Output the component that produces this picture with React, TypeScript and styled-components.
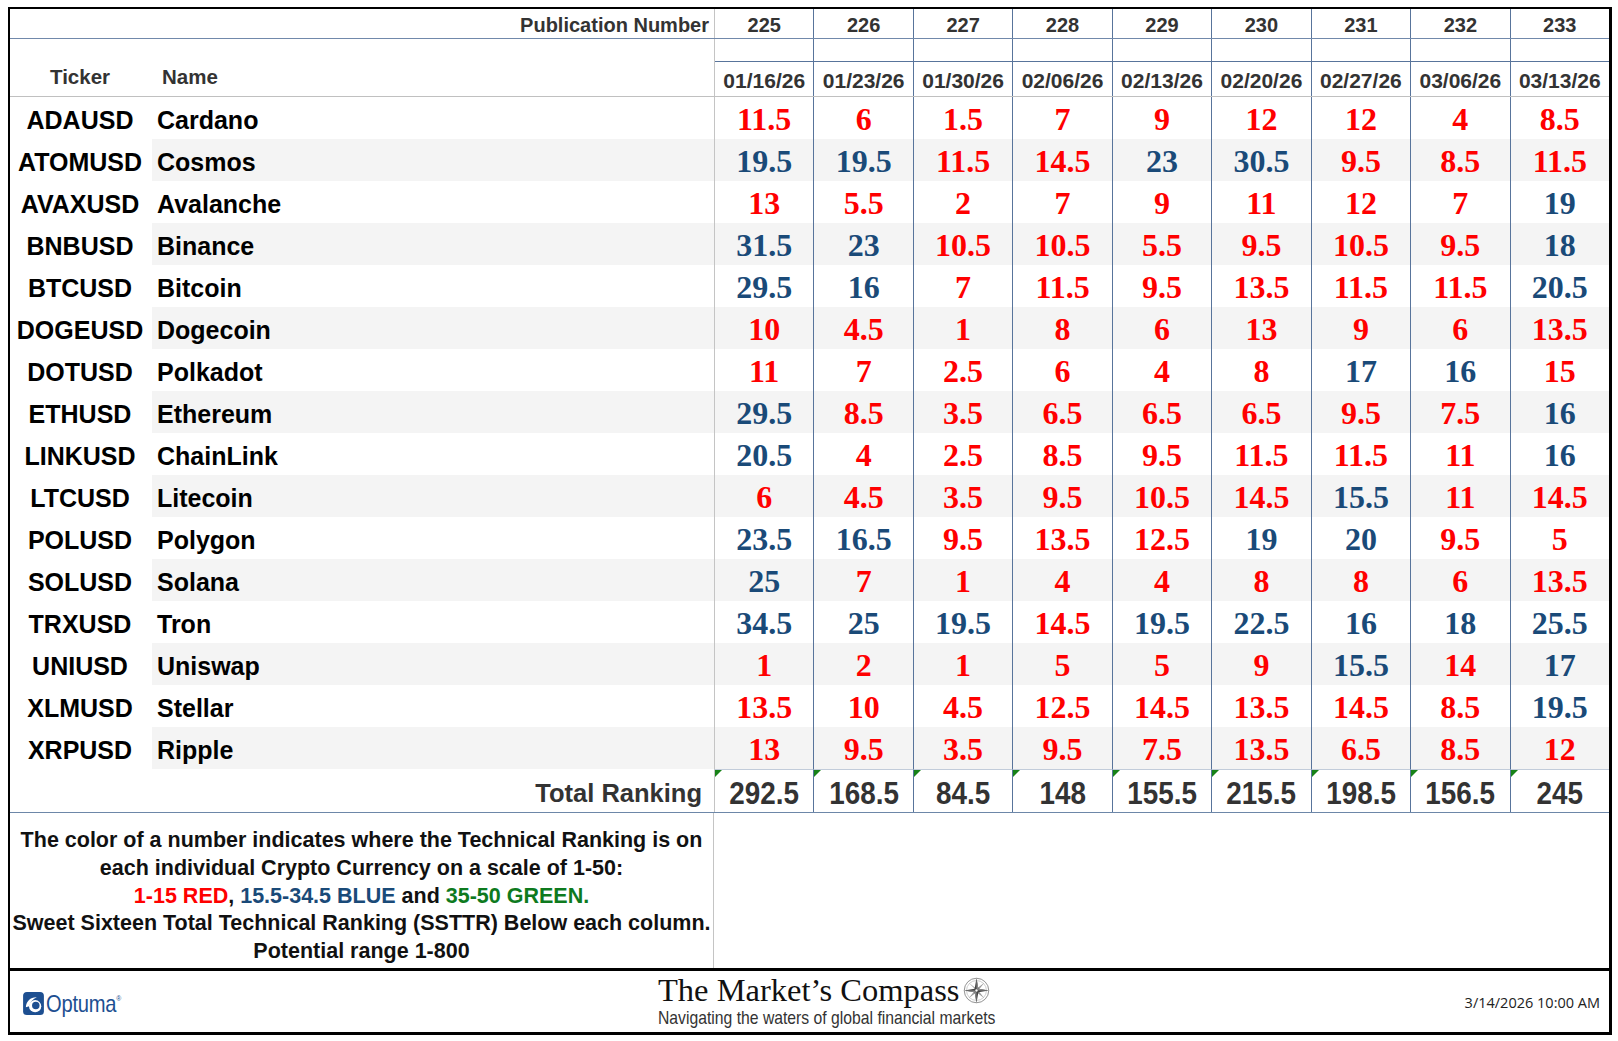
import React from "react";
import styled, { createGlobalStyle } from "styled-components";

const GlobalStyle = createGlobalStyle`
  html, body { margin: 0; padding: 0; background: #ffffff; }
  body { font-family: "Liberation Sans", Arial, sans-serif; }
  * { box-sizing: border-box; }
`;

const COLS = "140px 564px repeat(9, minmax(0, 1fr))";
const SANS = `"Liberation Sans", Arial, sans-serif`;
const SERIF = `"Liberation Serif", "Times New Roman", serif`;

type Coin = { ticker: string; name: string; values: number[] };

const PUBS = [225, 226, 227, 228, 229, 230, 231, 232, 233];
const DATES = ["01/16/26", "01/23/26", "01/30/26", "02/06/26", "02/13/26", "02/20/26", "02/27/26", "03/06/26", "03/13/26"];
const TOTALS = ["292.5", "168.5", "84.5", "148", "155.5", "215.5", "198.5", "156.5", "245"];

const DATA: Coin[] = [
  { ticker: "ADAUSD", name: "Cardano", values: [11.5, 6, 1.5, 7, 9, 12, 12, 4, 8.5] },
  { ticker: "ATOMUSD", name: "Cosmos", values: [19.5, 19.5, 11.5, 14.5, 23, 30.5, 9.5, 8.5, 11.5] },
  { ticker: "AVAXUSD", name: "Avalanche", values: [13, 5.5, 2, 7, 9, 11, 12, 7, 19] },
  { ticker: "BNBUSD", name: "Binance", values: [31.5, 23, 10.5, 10.5, 5.5, 9.5, 10.5, 9.5, 18] },
  { ticker: "BTCUSD", name: "Bitcoin", values: [29.5, 16, 7, 11.5, 9.5, 13.5, 11.5, 11.5, 20.5] },
  { ticker: "DOGEUSD", name: "Dogecoin", values: [10, 4.5, 1, 8, 6, 13, 9, 6, 13.5] },
  { ticker: "DOTUSD", name: "Polkadot", values: [11, 7, 2.5, 6, 4, 8, 17, 16, 15] },
  { ticker: "ETHUSD", name: "Ethereum", values: [29.5, 8.5, 3.5, 6.5, 6.5, 6.5, 9.5, 7.5, 16] },
  { ticker: "LINKUSD", name: "ChainLink", values: [20.5, 4, 2.5, 8.5, 9.5, 11.5, 11.5, 11, 16] },
  { ticker: "LTCUSD", name: "Litecoin", values: [6, 4.5, 3.5, 9.5, 10.5, 14.5, 15.5, 11, 14.5] },
  { ticker: "POLUSD", name: "Polygon", values: [23.5, 16.5, 9.5, 13.5, 12.5, 19, 20, 9.5, 5] },
  { ticker: "SOLUSD", name: "Solana", values: [25, 7, 1, 4, 4, 8, 8, 6, 13.5] },
  { ticker: "TRXUSD", name: "Tron", values: [34.5, 25, 19.5, 14.5, 19.5, 22.5, 16, 18, 25.5] },
  { ticker: "UNIUSD", name: "Uniswap", values: [1, 2, 1, 5, 5, 9, 15.5, 14, 17] },
  { ticker: "XLMUSD", name: "Stellar", values: [13.5, 10, 4.5, 12.5, 14.5, 13.5, 14.5, 8.5, 19.5] },
  { ticker: "XRPUSD", name: "Ripple", values: [13, 9.5, 3.5, 9.5, 7.5, 13.5, 6.5, 8.5, 12] },
];

const RED = "#ff0000";
const BLUE = "#1a4a78";
const GREEN = "#0e7a1e";

const rankColor = (v: number) => (v <= 15 ? RED : v < 35 ? BLUE : GREEN);

const Frame = styled.div`
  margin: 7px 0 0 8px;
  width: 1604px;
  border: 2px solid #000;
  border-right-width: 3px;
  border-bottom-width: 3px;
  background: #fff;
`;

const GridRow = styled.div<{ $h: number; $line?: string }>`
  display: grid;
  grid-template-columns: ${COLS};
  height: ${(p) => p.$h}px;
  border-bottom: ${(p) => (p.$line ? `1px solid ${p.$line}` : "none")};
`;

const ColCell = styled.div<{ $first?: boolean }>`
  border-left: 1px solid ${(p) => (p.$first ? "#c4c4c4" : "#58749b")};
  min-width: 0;
`;

const Condensed = styled.span<{ $k: number; $origin?: string }>`
  display: inline-block;
  transform: scaleX(${(p) => p.$k});
  transform-origin: ${(p) => p.$origin ?? "center"};
  white-space: nowrap;
`;

const HeaderLabel = styled.div`
  grid-column: span 2;
  display: flex;
  align-items: center;
  justify-content: flex-end;
  padding: 4px 5px 0 0;
  font: bold 20px ${SANS};
  color: #333;
`;

const PubCell = styled(ColCell)`
  display: flex;
  align-items: center;
  justify-content: center;
  padding-top: 4px;
  font: bold 20px ${SANS};
  color: #333;
`;

const ColumnTitles = styled.div`
  grid-column: span 2;
  display: grid;
  grid-template-columns: 140px 1fr;
  align-items: end;
  padding-bottom: 7px;
  font: bold 20.5px ${SANS};
  color: #333;
`;

const TickerTitle = styled.span`
  text-align: center;
`;

const NameTitle = styled.span`
  padding-left: 12px;
`;

const DateCell = styled(ColCell)`
  display: flex;
  flex-direction: column;
`;

const DateSpacer = styled.div`
  height: 23px;
  border-bottom: 1px solid #58749b;
`;

const DateText = styled.div`
  flex: 1;
  display: flex;
  align-items: center;
  justify-content: center;
  padding-top: 3px;
  font: bold 21px ${SANS};
  color: #333;
`;

const TickerCell = styled.div`
  display: flex;
  align-items: center;
  justify-content: center;
  padding-top: 5px;
  font: bold 25px ${SANS};
  color: #000;
`;

const NameCell = styled.div<{ $striped: boolean }>`
  display: flex;
  align-items: center;
  margin-left: 2px;
  padding: 5px 0 0 5px;
  background: ${(p) => (p.$striped ? "#f4f4f4" : "#fff")};
  font: bold 25px ${SANS};
  color: #000;
`;

const ValueCell = styled(ColCell)<{ $striped: boolean; $color: string }>`
  display: flex;
  align-items: center;
  justify-content: center;
  padding-top: 3px;
  background: ${(p) => (p.$striped ? "#f4f4f4" : "#fff")};
  font: bold 32px ${SERIF};
  color: ${(p) => p.$color};
`;

const TotalLabel = styled.div`
  grid-column: span 2;
  display: flex;
  align-items: center;
  justify-content: flex-end;
  padding: 5px 12px 0 0;
  font: bold 25.5px ${SANS};
  color: #333;
`;

const TotalCell = styled(ColCell)`
  position: relative;
  display: flex;
  align-items: center;
  justify-content: center;
  padding-top: 4px;
  border-top: 1px solid #c2ccda;
  font: bold 32px ${SANS};
  color: #333;

  &::before {
    content: "";
    position: absolute;
    top: 0;
    left: 0;
    border-top: 7px solid #178217;
    border-right: 7px solid transparent;
  }
`;

const LegendRow = styled.div`
  display: grid;
  grid-template-columns: 704px 1fr;
  height: 155px;
`;

const Legend = styled.div`
  border-right: 1px solid #c4c4c4;
  padding-top: 14px;
  text-align: center;
  font: bold 21.5px ${SANS};
  line-height: 27.8px;
  color: #111;
  white-space: nowrap;
`;

const Tone = styled.span<{ $c: string }>`
  color: ${(p) => p.$c};
`;

const Footer = styled.div`
  display: grid;
  grid-template-columns: 648px auto 1fr;
  align-items: center;
  height: 64px;
  border-top: 3px solid #000;
`;

const Brand = styled.div`
  display: flex;
  align-items: center;
  gap: 2px;
  padding: 4px 0 0 13px;
`;

const BrandName = styled.span`
  font: 24px ${SANS};
  color: #1d4f91;
  letter-spacing: -0.3px;
`;

const BrandMark = styled.sup`
  font-size: 8px;
  vertical-align: 11px;
`;

const Masthead = styled.div`
  display: flex;
  flex-direction: column;
  align-items: flex-start;
  padding-top: 2px;
`;

const MastTitle = styled.div`
  display: flex;
  align-items: center;
  gap: 4px;
  font: 32.5px ${SERIF};
  line-height: 30px;
  color: #111;
`;

const MastTag = styled.div`
  width: 340px;
  font: 18.5px ${SANS};
  line-height: 25px;
  color: #333;
`;

const Stamp = styled.div`
  justify-self: end;
  padding: 2px 9px 0 0;
  font: 14.5px "Open Sans", "Noto Sans", sans-serif;
  color: #222;
`;

const OptumaIcon = () => (
  <svg width="21" height="23" viewBox="0 0 19 21">
    <rect x="0" y="0" width="19" height="21" rx="3.5" fill="#1d4f91" />
    <circle cx="11" cy="13" r="5.6" fill="#fff" />
    <circle cx="11.6" cy="12.4" r="3.4" fill="#1d4f91" />
    <path d="M2.5 14 C3 8 7 4.5 12.5 4.8 C9 6.2 6.5 9 5.6 13 Z" fill="#fff" />
  </svg>
);

const CompassIcon = () => (
  <svg width="27" height="27" viewBox="0 0 26 26">
    <circle cx="13" cy="13" r="11.8" fill="none" stroke="#8a8a8a" strokeWidth="0.9" />
    <circle cx="13" cy="13" r="9.6" fill="none" stroke="#b0b0b0" strokeWidth="0.6" />
    <polygon points="13,13 5.5,5.5 13,11.3 20.5,5.5 14.7,13 20.5,20.5 13,14.7 5.5,20.5 11.3,13" fill="#9a9a9a" />
    <polygon points="13,1 14.8,11.2 25,13 14.8,14.8 13,25 11.2,14.8 1,13 11.2,11.2" fill="#444" />
    <polygon points="13,1 13,13 25,13 14.8,11.2" fill="#888" />
    <polygon points="13,25 13,13 1,13 11.2,14.8" fill="#888" />
    <circle cx="13" cy="13" r="1.4" fill="#fff" stroke="#444" strokeWidth="0.5" />
  </svg>
);

export default function App() {
  return (
    <>
      <GlobalStyle />
      <Frame>
        <GridRow $h={30} $line="#7189ab">
          <HeaderLabel>Publication Number</HeaderLabel>
          {PUBS.map((n, i) => (
            <PubCell key={n} $first={i === 0}>
              {n}
            </PubCell>
          ))}
        </GridRow>

        <GridRow $h={58} $line="#c0c0c0">
          <ColumnTitles>
            <TickerTitle>Ticker</TickerTitle>
            <NameTitle>Name</NameTitle>
          </ColumnTitles>
          {DATES.map((d, i) => (
            <DateCell key={d} $first={i === 0}>
              <DateSpacer />
              <DateText>{d}</DateText>
            </DateCell>
          ))}
        </GridRow>

        {DATA.map((coin, r) => {
          const striped = r % 2 === 1;
          return (
            <GridRow key={coin.ticker} $h={42}>
              <TickerCell>{coin.ticker}</TickerCell>
              <NameCell $striped={striped}>{coin.name}</NameCell>
              {coin.values.map((v, i) => (
                <ValueCell key={i} $first={i === 0} $striped={striped} $color={rankColor(v)}>
                  {v}
                </ValueCell>
              ))}
            </GridRow>
          );
        })}

        <GridRow $h={44} $line="#6d87a8">
          <TotalLabel>Total Ranking</TotalLabel>
          {TOTALS.map((t, i) => (
            <TotalCell key={i} $first={i === 0}>
              <Condensed $k={0.87}>{t}</Condensed>
            </TotalCell>
          ))}
        </GridRow>

        <LegendRow>
          <Legend>
            The color of a number indicates where the Technical Ranking is on
            <br />
            each individual Crypto Currency on a scale of 1-50:
            <br />
            <Tone $c={RED}>1-15 RED</Tone>, <Tone $c={BLUE}>15.5-34.5 BLUE</Tone> and{" "}
            <Tone $c={GREEN}>35-50 GREEN.</Tone>
            <br />
            Sweet Sixteen Total Technical Ranking (SSTTR) Below each column.
            <br />
            Potential range 1-800
          </Legend>
          <div />
        </LegendRow>

        <Footer>
          <Brand>
            <OptumaIcon />
            <BrandName>
              <Condensed $k={0.84} $origin="left">
                Optuma<BrandMark>®</BrandMark>
              </Condensed>
            </BrandName>
          </Brand>
          <Masthead>
            <MastTitle>
              The Market’s Compass
              <CompassIcon />
            </MastTitle>
            <MastTag>
              <Condensed $k={0.85} $origin="left">
                Navigating the waters of global financial markets
              </Condensed>
            </MastTag>
          </Masthead>
          <Stamp>3/14/2026 10:00 AM</Stamp>
        </Footer>
      </Frame>
    </>
  );
}
